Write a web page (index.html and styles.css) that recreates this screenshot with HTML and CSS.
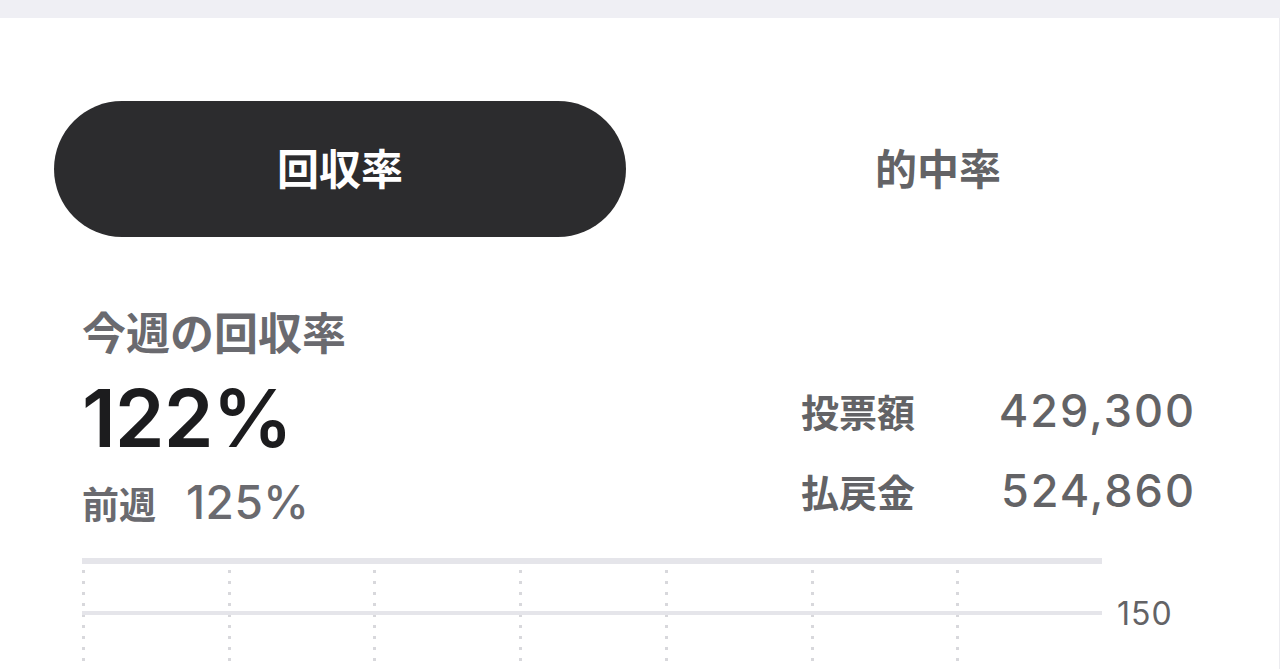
FILE: index.html
```html
<!DOCTYPE html>
<html lang="ja">
<head>
<meta charset="utf-8">
<title>回収率</title>
<link rel="stylesheet" href="styles.css">
</head>
<body>
<div class="topbar"></div>
<main class="card">
  <nav class="tabs">
    <button class="tab active">回収率</button>
    <button class="tab">的中率</button>
  </nav>
  <section class="summary">
    <div class="left">
      <h2 class="title">今週の回収率</h2>
      <div class="big">122%</div>
      <div class="prev"><span class="prev-label">前週</span><span class="prev-value">125%</span></div>
    </div>
    <div class="right">
      <div class="row"><span class="label">投票額</span><span class="value">429,300</span></div>
      <div class="row"><span class="label">払戻金</span><span class="value">524,860</span></div>
    </div>
  </section>
  <section class="chart">
    <div class="plot">
      <div class="col"></div><div class="col"></div><div class="col"></div><div class="col"></div><div class="col"></div><div class="col"></div><div class="col"></div>
      <div class="gridline"></div>
    </div>
    <div class="axis"><span class="tick">150</span></div>
  </section>
</main>
</body>
</html>
```
FILE: styles.css
```css
* { box-sizing: border-box; }
html, body { margin: 0; padding: 0; background: #ffffff; }
body {
  font-family: "Inter", "Noto Sans CJK JP", sans-serif;
  color: #1c1c1e;
  width: 1280px;
  height: 669px;
  overflow: hidden;
}
.topbar { height: 18px; background: #efeff4; }
.card {
  border-right: 1px solid #ececf0;
  height: 651px;
}
.tabs {
  display: grid;
  grid-template-columns: 572px 572px;
  column-gap: 26px;
  padding: 83px 0 0 54px;
}
.tab {
  height: 136px;
  border: 0;
  border-radius: 68px;
  background: transparent;
  font-family: "Noto Sans CJK JP", sans-serif;
  font-weight: 700;
  font-size: 42px;
  line-height: 1;
  padding: 0 0 4px;
  color: #636366;
}
.tab.active { background: #2c2c2e; color: #ffffff; }
.summary {
  display: flex;
  justify-content: space-between;
  padding: 70px 85px 0 82px;
}
.title {
  margin: 0;
  font-family: "Noto Sans CJK JP", sans-serif;
  font-weight: 700;
  font-size: 44px;
  line-height: 48px;
  color: #6a6a6f;
}
.big {
  margin-top: 19px;
  font-family: "Inter", sans-serif;
  font-weight: 600;
  font-size: 80px;
  line-height: 88px;
  letter-spacing: -1px;
  color: #1c1c1e;
}
.prev {
  display: flex;
  align-items: baseline;
  gap: 30px;
  margin-top: 14px;
  height: 52px;
  line-height: 52px;
}
.prev-label {
  font-family: "Noto Sans CJK JP", sans-serif;
  font-weight: 700;
  font-size: 37px;
  color: #6a6a6f;
}
.prev-value {
  font-family: "Inter", sans-serif;
  font-weight: 550;
  font-size: 46px;
  letter-spacing: 0.5px;
  color: #6a6a6f;
}
.right {
  display: flex;
  flex-direction: column;
  gap: 26px;
  padding-top: 76px;
  width: 393px;
}
.row { display: flex; justify-content: space-between; align-items: center; height: 54px; }
.label {
  font-family: "Noto Sans CJK JP", sans-serif;
  font-weight: 700;
  font-size: 38px;
  color: #636366;
}
.value {
  font-family: "Inter", sans-serif;
  font-weight: 550;
  font-size: 45px;
  color: #636366;
  letter-spacing: 2px;
  margin-right: -2px;
}
.chart {
  display: flex;
  padding: 30px 0 0 82px;
}
.plot {
  position: relative;
  width: 1020px;
  height: 120px;
  border-top: 6px solid #e5e5ea;
  display: grid;
  grid-template-columns: repeat(7, 1fr);
}
.col {
  background-image: repeating-linear-gradient(to bottom, transparent 0 6px, #d8d8dc 6px 9px, transparent 9px 11px);
  background-size: 3px 100%;
  background-repeat: no-repeat;
  background-position: 0 0;
}
.gridline {
  position: absolute;
  left: 0; right: 0;
  top: 47px;
  height: 4px;
  background: #e5e5ea;
}
.axis { padding: 37px 0 0 15px; line-height: 38px; }
.tick {
  font-family: "Inter", sans-serif;
  font-size: 32px;
  letter-spacing: 1px;
  color: #636366;
}
```
